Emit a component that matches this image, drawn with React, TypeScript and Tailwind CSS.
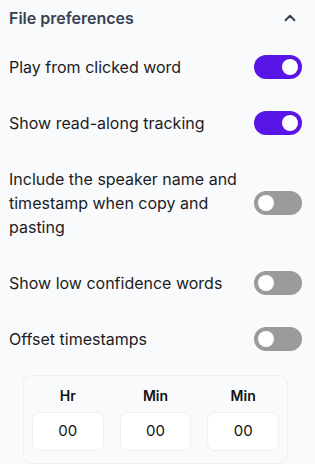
import { ChevronUp } from "lucide-react";

interface PrefRowProps {
  label: string;
  enabled: boolean;
}

const Toggle = ({ enabled }: { enabled: boolean }) => (
  <button
    type="button"
    role="switch"
    aria-checked={enabled}
    className={
      enabled
        ? "flex h-6 w-12 shrink-0 items-center justify-end rounded-full bg-[#5716e6] px-1"
        : "flex h-6 w-12 shrink-0 items-center justify-start rounded-full bg-[#9b9b9e] px-1"
    }
  >
    <span className="h-4 w-4 rounded-full bg-white" />
  </button>
);

const PrefRow = ({ label, enabled }: PrefRowProps) => (
  <div className="flex items-center justify-between gap-4">
    <span className="text-base leading-6 text-[#1c1c1e]">{label}</span>
    <Toggle enabled={enabled} />
  </div>
);

const fields = ["Hr", "Min", "Min"];

export default function App() {
  return (
    <div className="min-h-screen bg-[#f9fafb] pl-[9px] pr-[13px] font-['Inter',sans-serif]">
      <div className="flex h-9 items-center justify-between">
        <h2 className="text-base font-semibold text-[#374151]">File preferences</h2>
        <ChevronUp size={18} strokeWidth={2.5} className="mr-[3px] text-[#374151]" />
      </div>

      <div className="mt-[19px] flex flex-col gap-8">
        <PrefRow label="Play from clicked word" enabled />
        <PrefRow label="Show read-along tracking" enabled />
        <PrefRow label="Include the speaker name and timestamp when copy and pasting" enabled={false} />
        <PrefRow label="Show low confidence words" enabled={false} />
        <PrefRow label="Offset timestamps" enabled={false} />
      </div>

      <div className="mx-[14px] mt-6 grid grid-cols-3 gap-4 rounded-lg border border-[#eeeff1] px-2 pb-3 pt-[10px]">
        {fields.map((f, i) => (
          <div key={i} className="flex flex-col items-center gap-[6px]">
            <span className="text-sm font-semibold leading-5 text-[#111111]">{f}</span>
            <div className="flex h-[39px] w-full items-center justify-center rounded-lg border border-[#eeeff1] bg-white text-[15px] text-[#111111]">
              00
            </div>
          </div>
        ))}
      </div>
    </div>
  );
}
